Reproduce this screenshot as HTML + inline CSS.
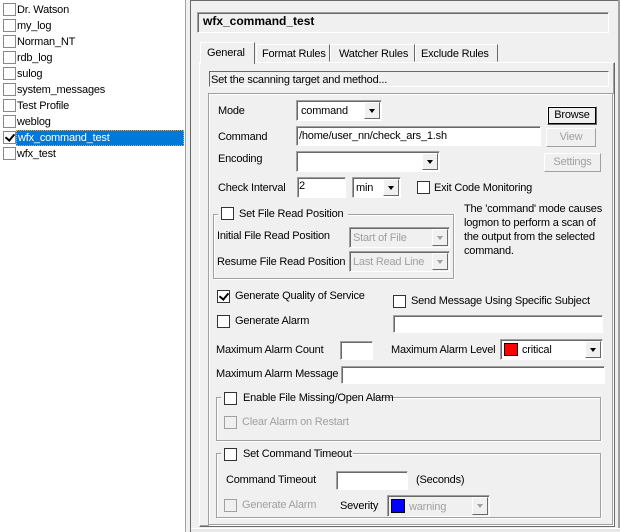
<!DOCTYPE html>
<html><head><style>
*{box-sizing:border-box;margin:0;padding:0}
body{width:620px;height:532px;overflow:hidden;background:#f0f0f0;font-family:"Liberation Sans",sans-serif;font-size:11px;letter-spacing:-0.2px;line-height:15px;color:#000;position:relative}
.a{position:absolute;white-space:nowrap}
.cb{position:absolute;width:13px;height:13px;border:1px solid #333;background:#fff}
.cb.d{border-color:#a0a0a0;background:#f0f0f0}
.cb.k::after{content:"";position:absolute;left:3px;top:0px;width:4px;height:7px;border:solid #000;border-width:0 2px 2px 0;transform:rotate(40deg)}
.sunk{position:absolute;background:#fff;border:1px solid;border-color:#a0a0a0 #fff #fff #a0a0a0;box-shadow:inset 1px 1px 0 #696969}
.combo{position:absolute;background:#fff;border:1px solid;border-color:#a0a0a0 #fff #fff #a0a0a0;box-shadow:inset 1px 1px 0 #696969}
.combo .btn{position:absolute;right:1px;top:1px;bottom:1px;width:16px;background:#f0f0f0;border:1px solid;border-color:#fff #696969 #696969 #fff}
.combo .btn::after{content:"";position:absolute;left:4px;top:6px;border:3.5px solid transparent;border-top:4px solid #000}
.combo.d .btn::after{border-top-color:#a0a0a0}
.combo.d{background:#f0f0f0}
.bt{position:absolute;border:1px solid;border-color:#fff #696969 #696969 #fff;box-shadow:1px 1px 0 #000 inset,-1px -1px 0 #000 inset;text-align:center;line-height:16px;background:#f0f0f0}
.bt.d{color:#a0a0a0;box-shadow:none;border-color:#fff #a0a0a0 #a0a0a0 #fff}
.grp{position:absolute;border:1px solid #a0a0a0;box-shadow:1px 1px 0 #fff inset,1px 1px 0 #fff}
.gray{color:#a0a0a0}
.L .a{margin-top:2px}
.L .cb{border-color:#888}
</style></head><body>
<div class="a" style="left:0;top:0;width:186px;height:532px;background:#fff;border-right:1px solid #a0a0a0"></div>
<div class="a" style="left:190px;top:0;width:1px;height:532px;background:#696969"></div>
<div class="a" style="left:16px;top:130px;width:168px;height:16px;background:#0078d7;border:1px dotted #f0a040"></div>
<div class="L">
<div class="cb" style="left:3px;top:3px"></div><div class="a" style="left:17px;top:1px">Dr. Watson</div>
<div class="cb" style="left:3px;top:19px"></div><div class="a" style="left:17px;top:17px">my_log</div>
<div class="cb" style="left:3px;top:35px"></div><div class="a" style="left:17px;top:33px">Norman_NT</div>
<div class="cb" style="left:3px;top:51px"></div><div class="a" style="left:17px;top:49px">rdb_log</div>
<div class="cb" style="left:3px;top:67px"></div><div class="a" style="left:17px;top:65px">sulog</div>
<div class="cb" style="left:3px;top:83px"></div><div class="a" style="left:17px;top:81px">system_messages</div>
<div class="cb" style="left:3px;top:99px"></div><div class="a" style="left:17px;top:97px">Test Profile</div>
<div class="cb" style="left:3px;top:115px"></div><div class="a" style="left:17px;top:113px">weblog</div>
<div class="cb k" style="left:3px;top:131px"></div><div class="a" style="left:18px;top:129px;color:#fff">wfx_command_test</div>
<div class="cb" style="left:3px;top:147px"></div><div class="a" style="left:17px;top:145px">wfx_test</div>
</div>
<div class="a" style="left:191px;top:0;width:429px;height:1px;background:#696969"></div>
<div class="a" style="left:618px;top:0;width:2px;height:532px;background:#a0a0a0"></div>
<div class="a" style="left:191px;top:528px;width:429px;height:4px;border-top:1px solid #fff;background:#e8e8e8"></div>

<div class="a" style="left:197px;top:12px;width:412px;height:21px;border:1px solid;border-color:#a0a0a0 #fff #fff #a0a0a0;box-shadow:inset 1px 1px 0 #696969"></div>
<div class="a" style="left:203px;top:14px;font-weight:bold;font-size:12px;letter-spacing:0">wfx_command_test</div>

<div class="a" style="left:199px;top:62px;width:416px;height:465px;border:1px solid;border-color:#fff #696969 #696969 #fff;box-shadow:-1px -1px 0 #a0a0a0 inset"></div>
<div class="a" style="left:200px;top:42px;width:55px;height:22px;background:#f0f0f0;border:1px solid;border-color:#fff #696969 transparent #fff;border-bottom:none"></div>
<div class="a" style="left:207px;top:46px">General</div>
<div class="a" style="left:256px;top:44px;width:74px;height:18px;border:1px solid;border-color:#fff #696969 transparent #fff"></div>
<div class="a" style="left:262px;top:47px">Format Rules</div>
<div class="a" style="left:330px;top:44px;width:85px;height:18px;border:1px solid;border-color:#fff #696969 transparent #fff"></div>
<div class="a" style="left:339px;top:47px">Watcher Rules</div>
<div class="a" style="left:415px;top:44px;width:83px;height:18px;border:1px solid;border-color:#fff #696969 transparent #fff"></div>
<div class="a" style="left:421px;top:47px">Exclude Rules</div>

<div class="a" style="left:209px;top:71px;width:400px;height:16px;border:1px solid;border-color:#696969 #fff #fff #696969"></div>
<div class="a" style="left:211px;top:73px">Set the scanning target and method...</div>

<div class="grp" style="left:208px;top:93px;width:405px;height:432px"></div>

<div class="a" style="left:218px;top:104px">Mode</div>
<div class="combo" style="left:296px;top:100px;width:86px;height:21px"><div class="btn"></div><span class="a" style="left:4px;top:3px">command</span></div>
<div class="bt" style="left:547px;top:106px;width:50px;height:19px">Browse</div>
<div class="a" style="left:218px;top:130px">Command</div>
<div class="sunk" style="left:296px;top:126px;width:245px;height:20px"><span class="a" style="left:2px;top:2px">/home/user_nn/check_ars_1.sh</span></div>
<div class="bt d" style="left:546px;top:128px;width:50px;height:19px">View</div>
<div class="a" style="left:218px;top:152px">Encoding</div>
<div class="combo" style="left:296px;top:151px;width:144px;height:21px"><div class="btn"></div></div>
<div class="bt d" style="left:544px;top:153px;width:57px;height:19px">Settings</div>
<div class="a" style="left:218px;top:181px">Check Interval</div>
<div class="sunk" style="left:297px;top:177px;width:49px;height:21px"><span class="a" style="left:1px;top:1px">2</span></div>
<div class="combo" style="left:352px;top:177px;width:49px;height:21px"><div class="btn"></div><span class="a" style="left:3px;top:3px">min</span></div>
<div class="cb" style="left:417px;top:181px"></div><div class="a" style="left:434px;top:181px">Exit Code Monitoring</div>

<div class="grp" style="left:213px;top:214px;width:241px;height:65px"></div>
<div class="a" style="left:218px;top:206px;width:130px;height:14px;background:#f0f0f0"></div>
<div class="cb" style="left:221px;top:207px"></div><div class="a" style="left:239px;top:207px">Set File Read Position</div>
<div class="a" style="left:217px;top:229px">Initial File Read Position</div>
<div class="combo d" style="left:349px;top:227px;width:101px;height:21px"><div class="btn"></div><span class="a gray" style="left:3px;top:3px">Start of File</span></div>
<div class="a" style="left:217px;top:255px">Resume File Read Position</div>
<div class="combo d" style="left:349px;top:251px;width:101px;height:21px"><div class="btn"></div><span class="a gray" style="left:3px;top:3px">Last Read Line</span></div>
<div class="a" style="left:464px;top:202px;line-height:14px">The 'command' mode causes<br>logmon to perform a scan of<br>the output from the selected<br>command.</div>

<div class="cb k" style="left:217px;top:290px"></div><div class="a" style="left:235px;top:289px">Generate Quality of Service</div>
<div class="cb" style="left:393px;top:295px"></div><div class="a" style="left:411px;top:294px">Send Message Using Specific Subject</div>
<div class="cb" style="left:217px;top:315px"></div><div class="a" style="left:235px;top:314px">Generate Alarm</div>
<div class="sunk" style="left:393px;top:315px;width:210px;height:18px"></div>
<div class="a" style="left:216px;top:343px">Maximum Alarm Count</div>
<div class="sunk" style="left:340px;top:341px;width:33px;height:19px"></div>
<div class="a" style="left:391px;top:343px">Maximum Alarm Level</div>
<div class="combo" style="left:500px;top:339px;width:103px;height:21px"><div class="btn"></div><span class="a" style="left:3px;top:3px;width:14px;height:13px;background:#f00;border:1px solid #000"></span><span class="a" style="left:21px;top:3px">critical</span></div>
<div class="a" style="left:216px;top:367px">Maximum Alarm Message</div>
<div class="sunk" style="left:341px;top:366px;width:264px;height:18px"></div>

<div class="grp" style="left:216px;top:397px;width:385px;height:44px"></div>
<div class="a" style="left:221px;top:390px;width:152px;height:14px;background:#f0f0f0"></div>
<div class="cb" style="left:224px;top:392px"></div><div class="a" style="left:243px;top:391px">Enable File Missing/Open Alarm</div>
<div class="cb d" style="left:224px;top:416px"></div><div class="a gray" style="left:242px;top:415px">Clear Alarm on Restart</div>

<div class="grp" style="left:216px;top:453px;width:385px;height:65px"></div>
<div class="a" style="left:221px;top:446px;width:132px;height:14px;background:#f0f0f0"></div>
<div class="cb" style="left:224px;top:448px"></div><div class="a" style="left:243px;top:447px">Set Command Timeout</div>
<div class="a" style="left:226px;top:473px">Command Timeout</div>
<div class="sunk" style="left:336px;top:471px;width:72px;height:19px"></div>
<div class="a" style="left:416px;top:473px">(Seconds)</div>
<div class="cb d" style="left:224px;top:499px"></div><div class="a gray" style="left:242px;top:498px">Generate Alarm</div>
<div class="a" style="left:340px;top:499px">Severity</div>
<div class="combo d" style="left:387px;top:495px;width:103px;height:22px"><div class="btn"></div><span class="a" style="left:3px;top:3px;width:14px;height:14px;background:#00f;border:1px solid #000"></span><span class="a gray" style="left:21px;top:4px">warning</span></div>
</body></html>
